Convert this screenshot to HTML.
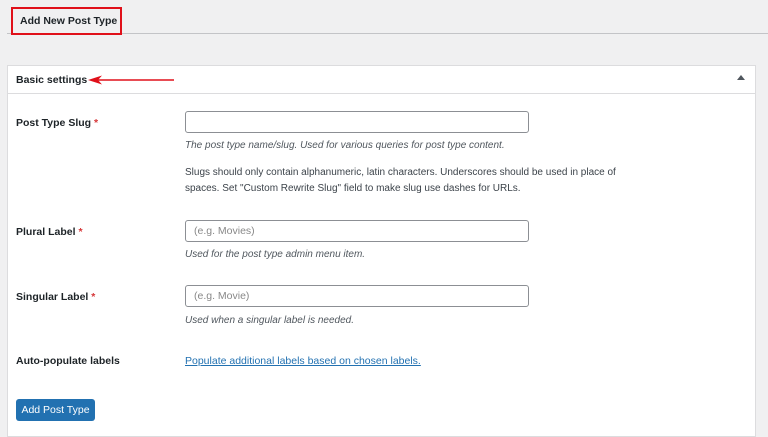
<!DOCTYPE html><html><head><style>
body{margin:0;width:768px;height:426px;background:#f0f0f1;font-family:"Liberation Sans",sans-serif;font-size:11px;color:#1d2327;position:relative;overflow:hidden}
.a{position:absolute;white-space:nowrap}
.lbl{position:absolute;left:16px;font-weight:bold;font-size:10.5px;white-space:nowrap}
.req{color:#d63638}
.inp{position:absolute;left:185px;width:342px;height:20px;border:1px solid #8c8f94;border-radius:3px;background:#fff;color:#888;font-size:10.5px;line-height:20px;white-space:nowrap}
.inp span{margin-left:8px}
.help{position:absolute;left:185px;font-style:italic;color:#50575e;font-size:10px;white-space:nowrap}
.txt{position:absolute;left:185px;color:#3c434a;font-size:10px;white-space:nowrap}
</style></head><body>
<div class="a" style="left:7px;top:33px;width:761px;height:1px;background:#c3c4c7"></div>
<div class="a" style="left:11px;top:7px;width:100px;height:24px;border:2px solid #e0101a;background:#f0f0f1;font-weight:bold;font-size:10.5px;line-height:24px;padding-left:7px">Add New Post Type</div>
<div class="a" style="left:7px;top:65px;width:747px;height:370px;background:#fff;border:1px solid #dcdcde"></div>
<div class="a" style="left:8px;top:93px;width:747px;height:1px;background:#dcdcde"></div>
<div class="lbl" style="top:74px">Basic settings</div>
<svg class="a" style="left:86px;top:74px" width="90" height="12"><line x1="6" y1="6" x2="88" y2="6" stroke="#e0101a" stroke-width="1.6"/><path d="M2 6 L16 1.5 L12 6 L16 10.5Z" fill="#e0101a"/></svg>
<svg class="a" style="left:737px;top:75px" width="8" height="6"><path d="M0 5 L4 0 L8 5Z" fill="#50575e"/></svg>
<div class="lbl" style="top:117px">Post Type Slug <span class="req">*</span></div>
<div class="inp" style="top:111px"></div>
<div class="help" style="top:140px">The post type name/slug. Used for various queries for post type content.</div>
<div class="txt" style="top:167px">Slugs should only contain alphanumeric, latin characters. Underscores should be used in place of</div>
<div class="txt" style="top:183px">spaces. Set "Custom Rewrite Slug" field to make slug use dashes for URLs.</div>
<div class="lbl" style="top:226px">Plural Label <span class="req">*</span></div>
<div class="inp" style="top:220px"><span>(e.g. Movies)</span></div>
<div class="help" style="top:249px">Used for the post type admin menu item.</div>
<div class="lbl" style="top:291px">Singular Label <span class="req">*</span></div>
<div class="inp" style="top:285px"><span>(e.g. Movie)</span></div>
<div class="help" style="top:315px">Used when a singular label is needed.</div>
<div class="lbl" style="top:355px">Auto-populate labels</div>
<div class="a" style="left:185px;top:355px;color:#2271b1;text-decoration:underline;font-size:10.5px">Populate additional labels based on chosen labels.</div>
<div class="a" style="left:16px;top:399px;width:79px;height:22px;background:#2271b1;border-radius:3px;color:#fff;font-size:10.5px;line-height:22px;text-align:center">Add Post Type</div>
</body></html>
